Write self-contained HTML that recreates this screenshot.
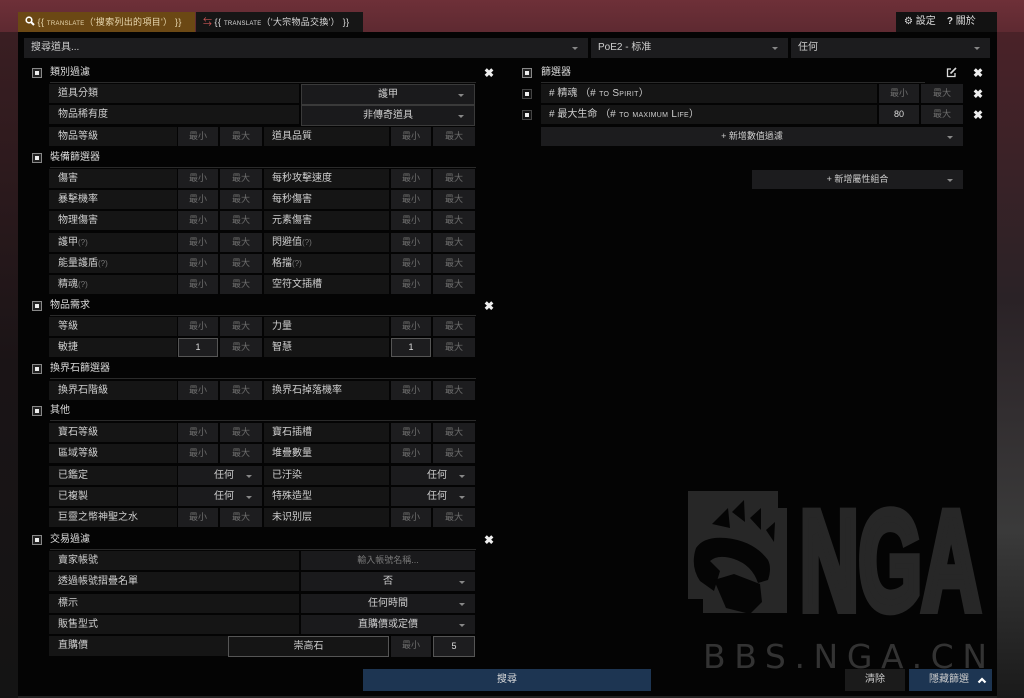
<!DOCTYPE html>
<html><head><meta charset="utf-8">
<style>
*{margin:0;padding:0;box-sizing:border-box}
body{width:1024px;height:698px;overflow:hidden;position:relative;font-family:"Liberation Sans","Noto Sans CJK TC",sans-serif;font-size:10px;color:#cfcfcf;
background:linear-gradient(180deg,#6e3038 0%,#52252c 8%,#2a1a1e 30%,#1c1618 60%,#222 100%)}
.bgr{position:absolute;left:997px;top:32px;width:27px;height:666px;background:linear-gradient(180deg,#4a2228,#2a2226 40%,#3a3a3a 75%,#1a1a1a)}
.bgl{position:absolute;left:0;top:32px;width:18px;height:666px;background:linear-gradient(180deg,#3a1e22,#1a1416 50%,#141414)}
.panel{position:absolute;left:18px;top:32px;width:979px;height:664px;background:#040404}
.a{position:absolute}
.c{position:absolute;height:19px;line-height:19px;white-space:nowrap;overflow:hidden}
.l{left:49px;width:128px;background:#151515;padding-left:9px}
.mn{left:178px;width:40px;background:#1d1d1f;color:#6e6e6e;text-align:center;font-size:9px}
.mx{left:220px;width:42px;background:#1d1d1f;color:#6e6e6e;text-align:center;font-size:9px}
.l2{left:264px;width:125px;background:#151515;padding-left:8px}
.mn2{left:391px;width:40px;background:#1d1d1f;color:#6e6e6e;text-align:center;font-size:9px}
.mx2{left:433px;width:42px;background:#1d1d1f;color:#6e6e6e;text-align:center;font-size:9px}
.lf{left:49px;width:250px;background:#151515;padding-left:9px}
.dd{left:301px;width:174px;background:#1a1a1c;text-align:center;border:1px solid #3a3a3a}
.dd2{left:301px;width:174px;background:#1a1a1c;text-align:center}
.ar::after{content:"";position:absolute;right:10px;top:9px;border-left:3px solid transparent;border-right:3px solid transparent;border-top:3px solid #888}
.sel1{left:178px;width:84px;background:#1b1b1d;text-align:center;padding-left:8px}
.sel2{left:391px;width:84px;background:#1b1b1d;text-align:center;padding-left:8px}
.cb{position:absolute;left:32px;width:10px;height:10px;border:1px solid #888;background:#222}
.cb::after{content:"";position:absolute;left:2px;top:2px;width:4px;height:4px;background:#eee}
.h{position:absolute;left:50px;font-size:10px;color:#ddd;line-height:12px}
.hl{position:absolute;left:50px;width:426px;height:1px;background:#2a2a2a}
.x{position:absolute;font-size:12px;font-weight:bold;color:#eee;line-height:12px}
.q{color:#777;font-size:8px}
.sc{font-variant:small-caps;letter-spacing:.3px}
</style></head><body>
<div class="bgl"></div><div class="bgr"></div>
<!-- tabs -->
<div class="a" style="left:18px;top:12px;width:177px;height:20px;background:#6b4814;color:#e8d8b0;line-height:20px;padding-left:7px;font-size:9px"><svg width="10" height="10" viewBox="0 0 10 10" style="vertical-align:-1px"><circle cx="4" cy="4" r="2.8" fill="none" stroke="#fff" stroke-width="1.6"/><path d="M6 6l3 3" stroke="#fff" stroke-width="2"/></svg> <span class="sc">{{ translate（'搜索列出的項目'） }}</span></div>
<div class="a" style="left:196px;top:12px;width:167px;height:20px;background:#161616;color:#ddd;line-height:20px;padding-left:7px;font-size:9px"><span style="color:#c55">⇆</span> <span class="sc">{{ translate（'大宗物品交換'） }}</span></div>
<div class="a" style="left:896px;top:12px;width:101px;height:20px;background:#121212;color:#ddd;line-height:20px;padding-left:8px;font-size:10px">⚙ 設定 &nbsp;&nbsp;&nbsp;<b>?</b> 關於</div>
<div class="panel"></div>
<!-- top bar -->
<div class="c ar" style="left:24px;top:38px;width:564px;height:20px;background:#1c1c1e;padding-left:7px;line-height:20px">搜尋道具...</div>
<div class="c ar" style="left:591px;top:38px;width:197px;height:20px;background:#1c1c1e;padding-left:7px;line-height:20px">PoE2 - 标准</div>
<div class="c ar" style="left:791px;top:38px;width:199px;height:20px;background:#1c1c1e;padding-left:7px;line-height:20px">任何</div>

<!-- 類別過濾 -->
<div class="cb" style="top:68px"></div><div class="h" style="top:67px">類別過濾</div><div class="x" style="left:484px;top:67px">✖</div><div class="hl" style="top:82px"></div>
<div class="c lf" style="top:84px">道具分類</div><div class="c dd ar" style="top:84px;height:21px">護甲</div>
<div class="c lf" style="top:105px">物品稀有度</div><div class="c dd ar" style="top:105px;height:21px">非傳奇道具</div>
<div class="c l" style="top:127px">物品等級</div><div class="c mn" style="top:127px">最小</div><div class="c mx" style="top:127px">最大</div><div class="c l2" style="top:127px">道具品質</div><div class="c mn2" style="top:127px">最小</div><div class="c mx2" style="top:127px">最大</div>

<!-- 裝備篩選器 -->
<div class="cb" style="top:153px"></div><div class="h" style="top:152px">裝備篩選器</div><div class="hl" style="top:167px"></div>
<div class="c l" style="top:169px">傷害</div><div class="c mn" style="top:169px">最小</div><div class="c mx" style="top:169px">最大</div><div class="c l2" style="top:169px">每秒攻擊速度</div><div class="c mn2" style="top:169px">最小</div><div class="c mx2" style="top:169px">最大</div>
<div class="c l" style="top:190px">暴擊機率</div><div class="c mn" style="top:190px">最小</div><div class="c mx" style="top:190px">最大</div><div class="c l2" style="top:190px">每秒傷害</div><div class="c mn2" style="top:190px">最小</div><div class="c mx2" style="top:190px">最大</div>
<div class="c l" style="top:211px">物理傷害</div><div class="c mn" style="top:211px">最小</div><div class="c mx" style="top:211px">最大</div><div class="c l2" style="top:211px">元素傷害</div><div class="c mn2" style="top:211px">最小</div><div class="c mx2" style="top:211px">最大</div>
<div class="c l" style="top:233px">護甲<span class="q">(?)</span></div><div class="c mn" style="top:233px">最小</div><div class="c mx" style="top:233px">最大</div><div class="c l2" style="top:233px">閃避值<span class="q">(?)</span></div><div class="c mn2" style="top:233px">最小</div><div class="c mx2" style="top:233px">最大</div>
<div class="c l" style="top:254px">能量護盾<span class="q">(?)</span></div><div class="c mn" style="top:254px">最小</div><div class="c mx" style="top:254px">最大</div><div class="c l2" style="top:254px">格擋<span class="q">(?)</span></div><div class="c mn2" style="top:254px">最小</div><div class="c mx2" style="top:254px">最大</div>
<div class="c l" style="top:275px">精魂<span class="q">(?)</span></div><div class="c mn" style="top:275px">最小</div><div class="c mx" style="top:275px">最大</div><div class="c l2" style="top:275px">空符文插槽</div><div class="c mn2" style="top:275px">最小</div><div class="c mx2" style="top:275px">最大</div>

<!-- 物品需求 -->
<div class="cb" style="top:301px"></div><div class="h" style="top:300px">物品需求</div><div class="x" style="left:484px;top:300px">✖</div><div class="hl" style="top:315px"></div>
<div class="c l" style="top:317px">等級</div><div class="c mn" style="top:317px">最小</div><div class="c mx" style="top:317px">最大</div><div class="c l2" style="top:317px">力量</div><div class="c mn2" style="top:317px">最小</div><div class="c mx2" style="top:317px">最大</div>
<div class="c l" style="top:338px">敏捷</div><div class="c mn" style="top:338px;border:1px solid #555;color:#ddd;line-height:17px">1</div><div class="c mx" style="top:338px">最大</div><div class="c l2" style="top:338px">智慧</div><div class="c mn2" style="top:338px;border:1px solid #555;color:#ddd;line-height:17px">1</div><div class="c mx2" style="top:338px">最大</div>

<!-- 換界石 -->
<div class="cb" style="top:364px"></div><div class="h" style="top:363px">換界石篩選器</div><div class="hl" style="top:378px"></div>
<div class="c l" style="top:381px">換界石階級</div><div class="c mn" style="top:381px">最小</div><div class="c mx" style="top:381px">最大</div><div class="c l2" style="top:381px">換界石掉落機率</div><div class="c mn2" style="top:381px">最小</div><div class="c mx2" style="top:381px">最大</div>

<!-- 其他 -->
<div class="cb" style="top:406px"></div><div class="h" style="top:405px">其他</div><div class="hl" style="top:420px"></div>
<div class="c l" style="top:423px">寶石等級</div><div class="c mn" style="top:423px">最小</div><div class="c mx" style="top:423px">最大</div><div class="c l2" style="top:423px">寶石插槽</div><div class="c mn2" style="top:423px">最小</div><div class="c mx2" style="top:423px">最大</div>
<div class="c l" style="top:444px">區域等級</div><div class="c mn" style="top:444px">最小</div><div class="c mx" style="top:444px">最大</div><div class="c l2" style="top:444px">堆疊數量</div><div class="c mn2" style="top:444px">最小</div><div class="c mx2" style="top:444px">最大</div>
<div class="c l" style="top:466px">已鑑定</div><div class="c sel1 ar" style="top:466px">任何</div><div class="c l2" style="top:466px">已汙染</div><div class="c sel2 ar" style="top:466px">任何</div>
<div class="c l" style="top:487px">已複製</div><div class="c sel1 ar" style="top:487px">任何</div><div class="c l2" style="top:487px">特殊造型</div><div class="c sel2 ar" style="top:487px">任何</div>
<div class="c l" style="top:508px">巨靈之幣神聖之水</div><div class="c mn" style="top:508px">最小</div><div class="c mx" style="top:508px">最大</div><div class="c l2" style="top:508px">未识别层</div><div class="c mn2" style="top:508px">最小</div><div class="c mx2" style="top:508px">最大</div>

<!-- 交易過濾 -->
<div class="cb" style="top:535px"></div><div class="h" style="top:534px">交易過濾</div><div class="x" style="left:484px;top:534px">✖</div><div class="hl" style="top:549px"></div>
<div class="c lf" style="top:551px">賣家帳號</div><div class="c dd2" style="top:551px;color:#777;font-size:9px">輸入帳號名稱...</div>
<div class="c lf" style="top:572px">透過帳號摺疊名單</div><div class="c dd2 ar" style="top:572px">否</div>
<div class="c lf" style="top:594px">標示</div><div class="c dd2 ar" style="top:594px">任何時間</div>
<div class="c lf" style="top:615px">販售型式</div><div class="c dd2 ar" style="top:615px">直購價或定價</div>
<div class="c lf" style="top:636px;width:180px;height:20px">直購價</div><div class="c" style="left:228px;top:636px;width:161px;height:21px;background:#151515;border:1px solid #555;text-align:center">崇高石</div><div class="c mn2" style="top:636px;height:21px">最小</div><div class="c mx2" style="top:636px;height:21px;border:1px solid #555;color:#ddd;line-height:19px">5</div>

<!-- right filters -->
<div class="cb" style="left:522px;top:68px"></div><div class="h" style="left:541px;top:67px">篩選器</div><div class="a" style="left:541px;top:82px;width:384px;height:1px;background:#2a2a2a"></div>
<svg class="a" style="left:946px;top:67px" width="11" height="11" viewBox="0 0 11 11"><path d="M5 2H1.5v7.5H9V6" fill="none" stroke="#ddd" stroke-width="1.3"/><path d="M4.5 6.5 10 1" stroke="#ddd" stroke-width="1.6"/></svg>
<div class="x" style="left:973px;top:67px">✖</div>
<div class="cb" style="left:522px;top:89px;border-color:#444;background:#111"></div>
<div class="c" style="left:541px;top:84px;width:336px;background:#151515;padding-left:8px"># 精魂 （<span class="sc"># to Spirit</span>）</div><div class="c mn" style="left:879px;top:84px">最小</div><div class="c mx" style="left:921px;top:84px">最大</div><div class="x" style="left:973px;top:88px">✖</div>
<div class="cb" style="left:522px;top:110px;border-color:#444;background:#111"></div>
<div class="c" style="left:541px;top:105px;width:336px;background:#151515;padding-left:8px"># 最大生命 （<span class="sc"># to maximum Life</span>）</div><div class="c mn" style="left:879px;top:105px;color:#ddd">80</div><div class="c mx" style="left:921px;top:105px">最大</div><div class="x" style="left:973px;top:109px">✖</div>
<div class="c ar" style="left:541px;top:127px;width:422px;background:#1c1c1e;text-align:center;font-size:9px">+ 新增數值過濾</div>
<div class="c ar" style="left:752px;top:170px;width:211px;background:#1c1c1e;text-align:center;font-size:9px">+ 新增屬性組合</div>

<!-- NGA logo -->
<svg class="a" style="left:686px;top:488px" width="310" height="184" viewBox="0 0 310 184">
<path d="M2 3H92V20H101V125H17V111H2Z" fill="#272727"/>
<path d="M26 36l16-16 2 20zM46 24l12-12 1 22zM64 30l11-10 0 22zM80 42l9-8 -1 20z" fill="#050505"/>
<path d="M10 60q8-12 30-10q28 3 42 22q4 8 0 20l-10 3q-6-18-24-24q-16-5-24 2l10 10-6 20-14-10q-10-15-4-33z" fill="#050505"/>
<path d="M28 92l20-6 26 10 2 18-12 12-24-6z" fill="#050505"/>
<text transform="translate(114 121) scale(0.58 1)" font-family="Liberation Sans,sans-serif" font-weight="bold" font-size="140" fill="#272727" stroke="#272727" stroke-width="10" stroke-linejoin="miter">NGA</text>
<text x="17" y="180" font-family="DejaVu Sans,Liberation Sans,sans-serif" font-size="33" textLength="284" lengthAdjust="spacing" fill="#333">BBS.NGA.CN</text>
</svg>

<!-- bottom buttons -->
<div class="c" style="left:363px;top:669px;width:288px;height:22px;line-height:22px;background:#1d3552;text-align:center;color:#ddd">搜尋</div>
<div class="c" style="left:845px;top:669px;width:60px;height:22px;line-height:22px;background:#1b1b1b;text-align:center;color:#ccc">清除</div>
<div class="c" style="left:909px;top:669px;width:83px;height:22px;line-height:22px;background:#1d3552;color:#ccc;padding-left:20px">隱藏篩選</div>
<svg class="a" style="left:977px;top:676px" width="10" height="8" viewBox="0 0 10 8"><path d="M1.5 6.5 5 3 8.5 6.5" fill="none" stroke="#fff" stroke-width="2.2"/></svg>
</body></html>
